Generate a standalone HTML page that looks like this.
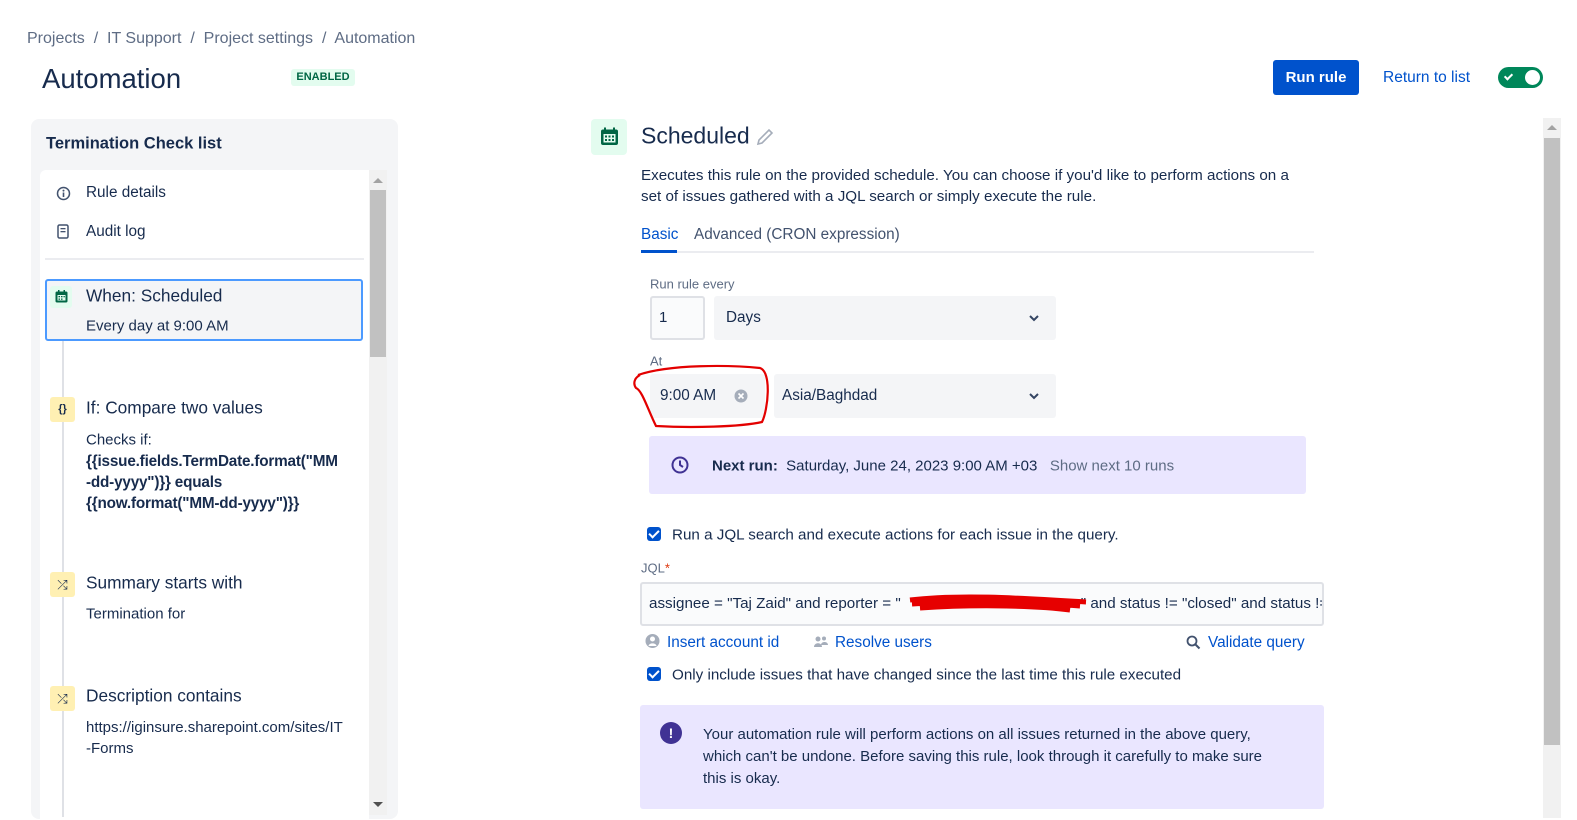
<!DOCTYPE html>
<html><head><meta charset="utf-8"><style>
*{box-sizing:border-box;margin:0;padding:0}
body{width:1577px;height:815px;overflow:hidden;background:#fff;font-family:"Liberation Sans",sans-serif;color:#172b4d;position:relative;font-size:15px}
.a{position:absolute;white-space:nowrap}
.t{transform:translateY(-50%)}
.link{color:#0052cc}
.cb{position:absolute;width:14px;height:14px;background:#0052cc;border-radius:3px}
.cb:after{content:"";position:absolute;left:4px;top:1px;width:4px;height:8px;border:solid #fff;border-width:0 2px 2px 0;transform:rotate(45deg)}
</style></head><body>
<div class="a t" style="left:27px;top:39px;color:#5e6c84;font-size:16px">Projects &nbsp;/&nbsp; IT Support &nbsp;/&nbsp; Project settings &nbsp;/&nbsp; Automation</div>
<div class="a t" style="left:42px;top:79px;font-size:27.5px">Automation</div>
<div class="a" style="left:291px;top:69px;width:64px;height:17px;background:#e3fcef;color:#006644;font-size:11px;font-weight:bold;text-align:center;line-height:17px;border-radius:3px">ENABLED</div>
<div class="a" style="left:1273px;top:60px;width:86px;height:35px;background:#0052cc;color:#fff;border-radius:3px;font-weight:bold;font-size:15px;text-align:center;line-height:35px">Run rule</div>
<div class="a t link" style="left:1383px;top:78px;font-size:15.5px">Return to list</div>
<div class="a" style="left:1498px;top:67px;width:45px;height:21px;background:#00875a;border-radius:11px"><div style="position:absolute;right:3px;top:3px;width:15px;height:15px;border-radius:50%;background:#fff"></div><div style="position:absolute;left:8px;top:5px;width:5px;height:8px;border:solid #fff;border-width:0 2px 2px 0;transform:rotate(45deg)"></div></div>

<!-- left panel -->
<div class="a" style="left:31px;top:119px;width:367px;height:700px;background:#f4f5f7;border-radius:8px"></div>
<div class="a t" style="left:46px;top:144px;font-size:16.5px;font-weight:bold;color:#172b4d">Termination Check list</div>
<div class="a" style="left:40px;top:170px;width:329px;height:650px;background:#fff;border-radius:6px 0 0 0"></div>
<div class="a" style="left:369px;top:170px;width:18px;height:645px;background:#f1f1f1"></div>
<div class="a" style="left:370px;top:190px;width:16px;height:167px;background:#c1c1c1"></div>
<div class="a" style="left:373px;top:178px;width:0;height:0;border:5px solid transparent;border-bottom:5px solid #a3a3a3;border-top:0"></div>
<div class="a" style="left:373px;top:802px;width:0;height:0;border:5px solid transparent;border-top:5px solid #505050;border-bottom:0"></div>
<svg class="a" style="left:56px;top:186px" width="15" height="15"><circle cx="7.5" cy="7.5" r="6" fill="none" stroke="#42526e" stroke-width="1.5"/><rect x="6.7" y="6.5" width="1.6" height="4.5" fill="#42526e"/><circle cx="7.5" cy="4.6" r="1" fill="#42526e"/></svg>
<div class="a t" style="left:86px;top:193px;font-size:15.3px">Rule details</div>
<svg class="a" style="left:57px;top:224px" width="12" height="15"><rect x="1" y="1" width="10" height="13" rx="1.5" fill="none" stroke="#42526e" stroke-width="1.5"/><rect x="3.5" y="4" width="5" height="1.3" fill="#42526e"/><rect x="3.5" y="7" width="5" height="1.3" fill="#42526e"/></svg>
<div class="a t" style="left:86px;top:232px;font-size:15.3px">Audit log</div>
<div class="a" style="left:45px;top:258px;width:319px;height:2px;background:#ebecf0"></div>
<div class="a" style="left:62px;top:307px;width:2px;height:510px;background:#dfe1e6"></div>
<div class="a" style="left:45px;top:279px;width:318px;height:62px;border:2px solid #4c9aff;background:#f4f5f7;border-radius:3px"></div>
<div class="a" style="left:50px;top:286px;width:22px;height:22px;background:#e3fcef;border-radius:3px"></div>
<svg class="a" style="left:55px;top:290px" width="13" height="13"><rect x="0.5" y="1.5" width="12" height="11" rx="1.5" fill="#006644"/><rect x="2.5" y="5" width="8" height="5.5" fill="#e3fcef"/><rect x="3" y="0" width="1.5" height="3" fill="#006644"/><rect x="8.5" y="0" width="1.5" height="3" fill="#006644"/><rect x="3.5" y="6" width="1.5" height="1.3" fill="#006644"/><rect x="6" y="6" width="1.5" height="1.3" fill="#006644"/><rect x="8.5" y="6" width="1.3" height="1.3" fill="#006644"/><rect x="3.5" y="8.5" width="1.5" height="1.3" fill="#006644"/><rect x="6" y="8.5" width="1.5" height="1.3" fill="#006644"/></svg>
<div class="a t" style="left:86px;top:296px;font-size:17.3px">When: Scheduled</div>
<div class="a t" style="left:86px;top:326px;font-size:15px">Every day at 9:00 AM</div>

<div class="a" style="left:50px;top:397px;width:25px;height:25px;background:#fff0b3;border-radius:3px;font-size:11px;font-weight:bold;text-align:center;line-height:25px;color:#172b4d">{}</div>
<div class="a t" style="left:86px;top:408px;font-size:17.3px">If: Compare two values</div>
<div class="a t" style="left:86px;top:440px;font-size:15px">Checks if:</div>
<div class="a" style="left:86px;top:451px;font-size:15.3px;font-weight:bold;line-height:21px;letter-spacing:-0.2px">{{issue.fields.TermDate.format("MM<br>-dd-yyyy")}} equals<br>{{now.format("MM-dd-yyyy")}}</div>

<div class="a" style="left:50px;top:572px;width:25px;height:25px;background:#fff0b3;border-radius:3px;font-size:13px;text-align:center;line-height:25px">⤮</div>
<div class="a t" style="left:86px;top:583px;font-size:17.3px">Summary starts with</div>
<div class="a t" style="left:86px;top:614px;font-size:15px">Termination for</div>
<div class="a" style="left:50px;top:686px;width:25px;height:25px;background:#fff0b3;border-radius:3px;font-size:13px;text-align:center;line-height:25px">⤮</div>
<div class="a t" style="left:86px;top:696px;font-size:17.3px">Description contains</div>
<div class="a" style="left:86px;top:717px;font-size:15px;line-height:21px">https://iginsure.sharepoint.com/sites/IT<br>-Forms</div>

<!-- right scrollbar -->
<div class="a" style="left:1543px;top:118px;width:18px;height:700px;background:#f1f1f1"></div>
<div class="a" style="left:1544px;top:138px;width:16px;height:607px;background:#c1c1c1"></div>
<div class="a" style="left:1547px;top:125px;width:0;height:0;border:5px solid transparent;border-bottom:5px solid #a3a3a3;border-top:0"></div>

<!-- main -->
<div class="a" style="left:591px;top:119px;width:36px;height:36px;background:#e3fcef;border-radius:4px"></div>
<svg class="a" style="left:600px;top:127px" width="19" height="19"><rect x="1" y="2.5" width="17" height="15.5" rx="2" fill="#006644"/><rect x="3.5" y="7" width="12" height="8.5" fill="#e3fcef"/><rect x="4" y="0.5" width="2" height="4" fill="#006644"/><rect x="13" y="0.5" width="2" height="4" fill="#006644"/><g fill="#006644"><rect x="5" y="8.5" width="2" height="2"/><rect x="8.5" y="8.5" width="2" height="2"/><rect x="12" y="8.5" width="2" height="2"/><rect x="5" y="12" width="2" height="2"/><rect x="8.5" y="12" width="2" height="2"/><rect x="12" y="12" width="2" height="2"/></g></svg>
<div class="a t" style="left:641px;top:136px;font-size:23px">Scheduled</div>
<svg class="a" style="left:755px;top:127px" width="20" height="20"><path d="M3 17 L4 13 L14 3 L17 6 L7 16 Z" fill="none" stroke="#a5adba" stroke-width="1.6"/></svg>
<div class="a" style="left:641px;top:165px;font-size:15.2px;line-height:21px">Executes this rule on the provided schedule. You can choose if you'd like to perform actions on a<br>set of issues gathered with a JQL search or simply execute the rule.</div>
<div class="a t link" style="left:641px;top:235px;font-size:15.3px">Basic</div>
<div class="a t" style="left:694px;top:235px;font-size:15.3px;color:#42526e">Advanced (CRON expression)</div>
<div class="a" style="left:641px;top:251px;width:673px;height:2px;background:#ebecf0"></div>
<div class="a" style="left:641px;top:250px;width:36px;height:3px;background:#0052cc"></div>

<div class="a t" style="left:650px;top:284px;font-size:13px;color:#5e6c84">Run rule every</div>
<div class="a" style="left:650px;top:296px;width:55px;height:44px;border:2px solid #dfe1e6;background:#fafbfc;border-radius:3px;padding-left:7px;line-height:40px;font-size:15px">1</div>
<div class="a" style="left:714px;top:296px;width:342px;height:44px;background:#f4f5f7;border-radius:3px;padding-left:12px;line-height:44px;font-size:15.3px">Days</div>
<svg class="a" style="left:1028px;top:313px" width="12" height="10"><path d="M2 3 L6 7 L10 3" fill="none" stroke="#344563" stroke-width="2"/></svg>
<div class="a t" style="left:650px;top:361px;font-size:13px;color:#5e6c84">At</div>
<div class="a" style="left:650px;top:374px;width:115px;height:44px;background:#f4f5f7;border-radius:3px;padding-left:10px;line-height:44px;font-size:15.3px">9:00 AM</div>
<svg class="a" style="left:734px;top:389px" width="14" height="14"><circle cx="7" cy="7" r="6.5" fill="#a5adba"/><path d="M4.5 4.5 L9.5 9.5 M9.5 4.5 L4.5 9.5" stroke="#fff" stroke-width="1.6"/></svg>
<div class="a" style="left:774px;top:374px;width:282px;height:44px;background:#f4f5f7;border-radius:3px;padding-left:8px;line-height:44px;font-size:15.3px">Asia/Baghdad</div>
<svg class="a" style="left:1028px;top:391px" width="12" height="10"><path d="M2 3 L6 7 L10 3" fill="none" stroke="#344563" stroke-width="2"/></svg>
<svg class="a" style="left:630px;top:360px" width="145" height="70"><path d="M8 15 C40 4 100 5 130 8 C142 12 138 50 132 62 C110 67 60 68 26 66 C18 50 12 30 6 28 C3 24 4 18 10 15" fill="none" stroke="#e30000" stroke-width="2.2"/></svg>

<div class="a" style="left:649px;top:436px;width:657px;height:58px;background:#eae6ff;border-radius:3px"></div>
<svg class="a" style="left:671px;top:456px" width="18" height="18"><circle cx="9" cy="9" r="7.5" fill="none" stroke="#403294" stroke-width="2"/><path d="M9 4.5 V9 L12 11" fill="none" stroke="#403294" stroke-width="2"/></svg>
<div class="a t" style="left:712px;top:466px;font-size:15px"><b>Next run:</b>&nbsp; Saturday, June 24, 2023 9:00 AM +03 &nbsp;&nbsp;<span style="color:#5e6c84">Show next 10 runs</span></div>

<div class="cb" style="left:647px;top:527px"></div>
<div class="a t" style="left:672px;top:535px;font-size:15.2px">Run a JQL search and execute actions for each issue in the query.</div>
<div class="a t" style="left:641px;top:568px;font-size:13px;color:#5e6c84">JQL<span style="color:#de350b">*</span></div>
<div class="a" style="left:640px;top:582px;width:684px;height:44px;border:2px solid #dfe1e6;background:#fafbfc;border-radius:3px;padding-left:7px;line-height:40px;font-size:15.2px;overflow:hidden">assignee = "Taj Zaid" and reporter = "<span style="display:inline-block;width:180px"></span>" and status != "closed" and status != "done"</div>
<svg class="a" style="left:900px;top:592px" width="192" height="24"><path d="M10 8 C60 2 120 6 186 10 M12 12 C70 8 130 10 180 14 M20 16 C80 12 140 14 170 18" stroke="#e60000" stroke-width="5" fill="none"/></svg>
<svg class="a" style="left:645px;top:633px" width="15" height="16"><circle cx="7.5" cy="8" r="7" fill="#a5adba"/><circle cx="7.5" cy="6" r="2.5" fill="#fff"/><path d="M3.5 13 C4 9.5 11 9.5 11.5 13" fill="#fff"/></svg>
<div class="a t link" style="left:667px;top:643px;font-size:15.3px">Insert account id</div>
<svg class="a" style="left:813px;top:635px" width="16" height="14"><circle cx="5" cy="4" r="2.5" fill="#a5adba"/><circle cx="11" cy="3.5" r="2" fill="#a5adba"/><path d="M1 12 C1 7 9 7 9 12Z M8 10 C8 6 15 6 15 10Z" fill="#a5adba"/></svg>
<div class="a t link" style="left:835px;top:643px;font-size:15.3px">Resolve users</div>
<svg class="a" style="left:1186px;top:635px" width="15" height="15"><circle cx="6" cy="6" r="4.5" fill="none" stroke="#42526e" stroke-width="1.8"/><path d="M9.5 9.5 L13.5 13.5" stroke="#42526e" stroke-width="2"/></svg>
<div class="a t link" style="left:1208px;top:643px;font-size:15.3px">Validate query</div>
<div class="cb" style="left:647px;top:667px"></div>
<div class="a t" style="left:672px;top:675px;font-size:15.2px">Only include issues that have changed since the last time this rule executed</div>

<div class="a" style="left:640px;top:705px;width:684px;height:104px;background:#eae6ff;border-radius:3px"></div>
<div class="a" style="left:660px;top:722px;width:22px;height:22px;border-radius:50%;background:#403294;color:#fff;font-weight:bold;text-align:center;line-height:22px;font-size:14px">!</div>
<div class="a" style="left:703px;top:724px;font-size:15px;line-height:22px">Your automation rule will perform actions on all issues returned in the above query,<br>which can't be undone. Before saving this rule, look through it carefully to make sure<br>this is okay.</div>
</body></html>
